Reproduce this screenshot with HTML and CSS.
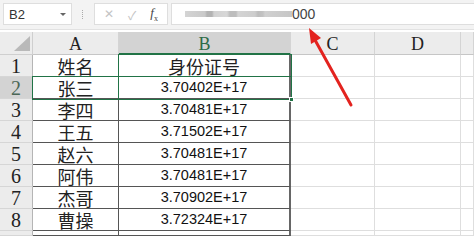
FILE: index.html
```html
<!DOCTYPE html>
<html lang="zh-CN">
<head>
    <meta charset="UTF-8">
    <meta name="viewport" content="width=device-width, initial-scale=1.0">
    <title>身份证号</title>
    <link rel="stylesheet" href="styles.css">
</head>
<body>
    <!-- 编辑栏 -->
    <div class="toolbar">
        <div class="name-box">
            <span>B2</span>
            <span class="drop"></span>
        </div>
        <div class="grip"></div>
        <div class="fx-box">
            <span class="fx-btn">✕</span>
            <span class="fx-btn">✓</span>
            <span class="fx-btn fx"><i>f</i><sub>x</sub></span>
        </div>
        <div class="formula">
            <span class="blur"></span>
            <span class="value">000</span>
        </div>
    </div>

    <!-- 表格 -->
    <div class="sheet">
        <div class="corner"><span class="tri"></span></div>
        <div class="col-head">A</div>
        <div class="col-head active">B</div>
        <div class="col-head">C</div>
        <div class="col-head">D</div>
        <div class="col-head"></div>

        <div class="row-head">1</div>
        <div class="cell name">姓名</div>
        <div class="cell id title">身份证号</div>
        <div class="cell"></div><div class="cell"></div><div class="cell"></div>

        <div class="row-head active">2</div>
        <div class="cell name">张三</div>
        <div class="cell id">3.70402E+17</div>
        <div class="cell"></div><div class="cell"></div><div class="cell"></div>

        <div class="row-head">3</div>
        <div class="cell name">李四</div>
        <div class="cell id">3.70481E+17</div>
        <div class="cell"></div><div class="cell"></div><div class="cell"></div>

        <div class="row-head">4</div>
        <div class="cell name">王五</div>
        <div class="cell id">3.71502E+17</div>
        <div class="cell"></div><div class="cell"></div><div class="cell"></div>

        <div class="row-head">5</div>
        <div class="cell name">赵六</div>
        <div class="cell id">3.70481E+17</div>
        <div class="cell"></div><div class="cell"></div><div class="cell"></div>

        <div class="row-head">6</div>
        <div class="cell name">阿伟</div>
        <div class="cell id">3.70481E+17</div>
        <div class="cell"></div><div class="cell"></div><div class="cell"></div>

        <div class="row-head">7</div>
        <div class="cell name">杰哥</div>
        <div class="cell id">3.70902E+17</div>
        <div class="cell"></div><div class="cell"></div><div class="cell"></div>

        <div class="row-head">8</div>
        <div class="cell name">曹操</div>
        <div class="cell id">3.72324E+17</div>
        <div class="cell"></div><div class="cell"></div><div class="cell"></div>

        <!-- 第 9 行只露出一点 -->
        <div class="row-head"></div>
        <div class="cell name"></div>
        <div class="cell id"></div>
        <div class="cell"></div><div class="cell"></div><div class="cell"></div>
    </div>

    <!-- 选中框 -->
    <div class="sel sel-b"></div>
    <div class="sel sel-row"></div>
    <div class="handle"></div>

    <!-- 红色箭头 -->
    <svg class="arrow" width="474" height="236" viewBox="0 0 474 236">
        <line x1="351" y1="105" x2="315" y2="40" stroke="#e3231f" stroke-width="3" stroke-linecap="round"/>
        <polygon points="309,28 321,38 311,44" fill="#e3231f"/>
    </svg>
</body>
</html>
```

FILE: styles.css
```css
body {
    margin: 0;
    width: 474px;
    height: 236px;
    overflow: hidden;
    position: relative;
    background: #ffffff;
    font-family: "Liberation Sans", Arial, sans-serif;
}

/* 编辑栏 */
.toolbar {
    height: 30px;
    box-sizing: border-box;
    padding: 3px 0 0 3px;
    display: flex;
    align-items: flex-start;
    background: #f3f3f3;
    border-bottom: 1px solid #e2e2e2;
    margin-bottom: 2px;
}

.name-box {
    width: 69px;
    height: 22px;
    box-sizing: border-box;
    background: #fff;
    border: 1px solid #dedede;
    display: flex;
    align-items: center;
    justify-content: space-between;
    padding: 0 5px 0 5px;
    font-size: 13px;
    color: #333;
}

.drop {
    width: 0;
    height: 0;
    border-left: 3px solid transparent;
    border-right: 3px solid transparent;
    border-top: 3px solid #666;
}

.grip {
    width: 1px;
    height: 9px;
    margin: 7px 10px 0 10px;
    border-left: 1px dotted #aaa;
}

.fx-box {
    width: 74px;
    height: 22px;
    box-sizing: border-box;
    background: #fff;
    border: 1px solid #dedede;
    display: flex;
    align-items: center;
    justify-content: space-around;
    padding: 0 2px;
    margin-right: 3px;
}

.fx-btn {
    font-size: 12px;
    color: #c4c4c4;
}

.fx {
    color: #444;
    font-family: "Liberation Serif", serif;
    font-size: 13px;
}

.fx sub {
    font-size: 8px;
}

.formula {
    flex: 1;
    height: 22px;
    box-sizing: border-box;
    background: #fff;
    border: 1px solid #dedede;
    border-right: none;
    display: flex;
    align-items: center;
    padding-left: 13px;
}

.blur {
    width: 107px;
    height: 6px;
    background: linear-gradient(90deg,
        #d4d4d4 0, #c9c9c9 20px, #b3b3b3 22px, #b3b3b3 27px, #d2d2d2 29px,
        #d8d8d8 42px, #bdbdbd 45px, #bdbdbd 51px, #d4d4d4 53px,
        #cdcdcd 70px, #bdbdbd 73px, #c3c3c3 78px, #d0d0d0 80px, #c6c6c6 107px);
}

.value {
    font-size: 14px;
    color: #444;
}

/* 表格 */
.sheet {
    display: grid;
    grid-template-columns: 33px 86px 172px 84px 86px 13px;
    grid-template-rows: 23px repeat(8, 22px) 5px;
    line-height: 1;
}

.corner {
    background: #ececec;
    border-right: 1px solid #cfcfcf;
    border-bottom: 1px solid #cfcfcf;
    position: relative;
}

.tri {
    position: absolute;
    right: 2px;
    bottom: 3px;
    width: 0;
    height: 0;
    border-left: 16px solid transparent;
    border-bottom: 15px solid #b9b9b9;
}

.col-head {
    background: #ececec;
    border-right: 1px solid #d4d4d4;
    border-bottom: 1px solid #c6c6c6;
    display: flex;
    align-items: center;
    justify-content: center;
    padding-top: 2px;
    box-sizing: border-box;
    font-family: "Liberation Serif", serif;
    font-size: 18px;
    color: #222;
}

.col-head.active {
    background: #d3d3d3;
    color: #2d6b46;
    border-bottom: 2px solid #217346;
}

.row-head {
    background: #ececec;
    border-right: 1px solid #b5b5b5;
    border-bottom: 1px solid #d6d6d6;
    display: flex;
    align-items: center;
    justify-content: center;
    font-family: "Liberation Serif", serif;
    font-size: 20px;
    color: #222;
}

.row-head.active {
    background: #d3d3d3;
    color: #4a6656;
}

.cell {
    border-right: 1px solid #dedede;
    border-bottom: 1px solid #dedede;
    display: flex;
    align-items: center;
    justify-content: center;
}

.cell.name {
    border-right: 1px solid #555;
    border-bottom: 1px solid #555;
    font-family: "Noto Sans CJK SC", sans-serif;
    font-size: 18px;
    color: #222;
}

.cell.id {
    border-right: 2px solid #666;
    border-bottom: 1px solid #555;
    font-size: 14.5px;
    color: #111;
}

.cell.id.title {
    font-family: "Noto Sans CJK SC", sans-serif;
    font-size: 18px;
    color: #222;
}

/* 选中框 */
.sel {
    position: absolute;
    box-sizing: border-box;
    border: 1.5px solid #217346;
}

.sel-b {
    left: 118px;
    top: 54px;
    width: 174px;
    height: 46px;
}

.sel-row {
    left: 32px;
    top: 76px;
    width: 260px;
    height: 24px;
}

.handle {
    position: absolute;
    left: 289px;
    top: 97px;
    width: 5px;
    height: 5px;
    background: #217346;
    border: 1px solid #fff;
    box-sizing: border-box;
}

/* 红色箭头 */
.arrow {
    position: absolute;
    left: 0;
    top: 0;
}
```
